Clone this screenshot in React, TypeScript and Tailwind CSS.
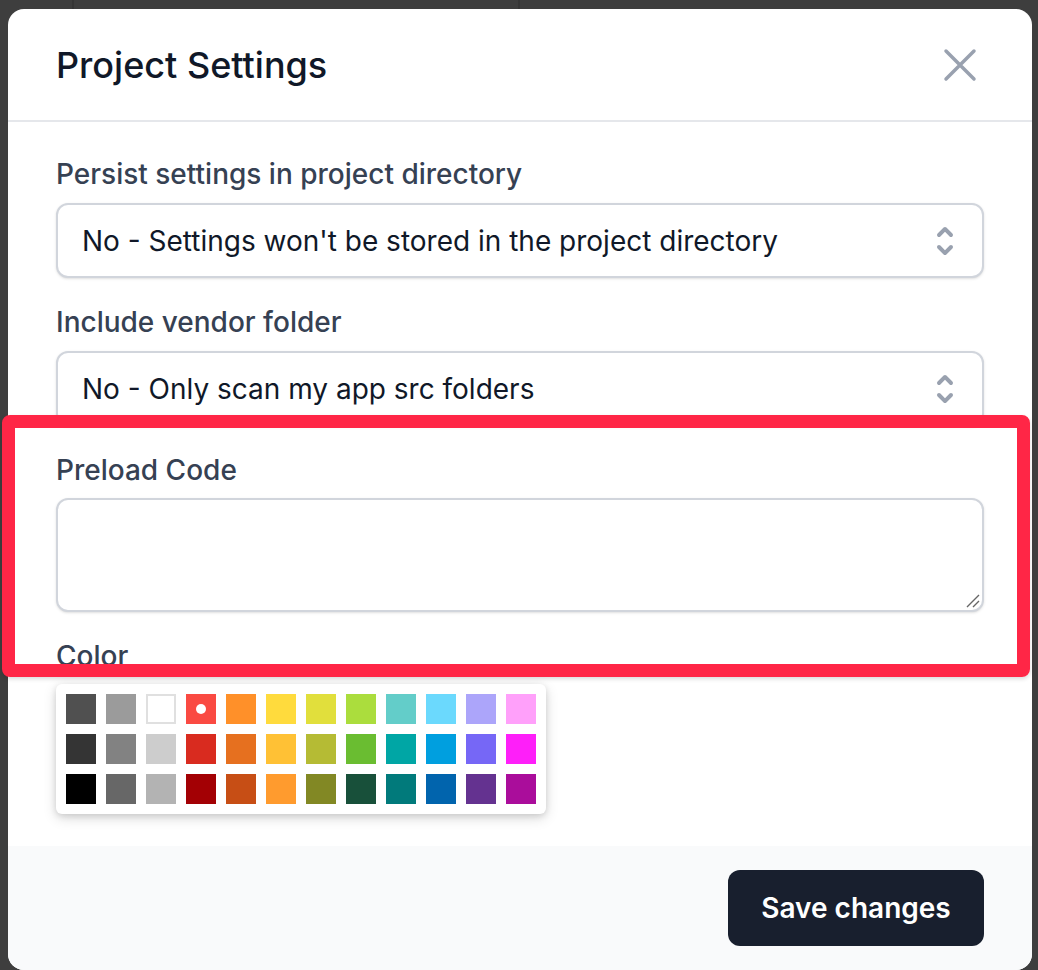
import React from 'react';

const swatchRows: string[][] = [
  ['bg-[#505050]', 'bg-[#9b9b9b]', 'bg-[#ffffff]', 'bg-[#fa4a42]', 'bg-[#ff9029]', 'bg-[#ffdb3d]', 'bg-[#e1df3c]', 'bg-[#abdd3d]', 'bg-[#63cdc9]', 'bg-[#6bd9fd]', 'bg-[#aca5fa]', 'bg-[#ffa0fa]'],
  ['bg-[#343434]', 'bg-[#828282]', 'bg-[#cdcdcd]', 'bg-[#d92b1f]', 'bg-[#e6701f]', 'bg-[#ffc135]', 'bg-[#b5bb34]', 'bg-[#6abd31]', 'bg-[#00a6a5]', 'bg-[#009fdf]', 'bg-[#7667f6]', 'bg-[#fe1ff9]'],
  ['bg-[#000000]', 'bg-[#676767]', 'bg-[#b3b3b3]', 'bg-[#a30004]', 'bg-[#c74e15]', 'bg-[#ff9b2e]', 'bg-[#828824]', 'bg-[#18503a]', 'bg-[#017a7b]', 'bg-[#0164ad]', 'bg-[#643290]', 'bg-[#aa0d9b]'],
];

function SelectorIcon() {
  return (
    <svg viewBox="0 0 20 20" fill="currentColor" className="h-[40px] w-[40px] text-gray-400">
      <path
        fillRule="evenodd"
        d="M10 3a1 1 0 01.707.293l3 3a1 1 0 01-1.414 1.414L10 5.414 7.707 7.707a1 1 0 01-1.414-1.414l3-3A1 1 0 0110 3zm-3.707 9.293a1 1 0 011.414 0L10 14.586l2.293-2.293a1 1 0 011.414 1.414l-3 3a1 1 0 01-1.414 0l-3-3a1 1 0 010-1.414z"
        clipRule="evenodd"
      />
    </svg>
  );
}

function FakeSelect({ value }: { value: string }) {
  return (
    <div className="mt-[9px] flex h-[75px] items-center justify-between rounded-[12px] border-2 border-gray-300 bg-white pl-[24px] pr-[17px] shadow-sm">
      <span className="text-[28px] text-gray-900">{value}</span>
      <SelectorIcon />
    </div>
  );
}

function Label({ children }: { children: React.ReactNode }) {
  return <div className="h-[40px] text-[28px] font-medium leading-[40px] text-gray-700">{children}</div>;
}

export default function App() {
  return (
    <div className="relative h-[970px] w-[1038px] overflow-hidden bg-[#3e3e3e] font-['Inter',sans-serif]">
      {/* page behind the dialog */}
      <div className="flex h-[9px]">
        <div className="w-[74px] border-r-2 border-[#363636]" />
        <div className="w-[446px] border-r-2 border-[#363636]" />
      </div>

      <div className="ml-[8px] flex h-[961px] w-[1024px] flex-col overflow-hidden rounded-[16px] bg-white">
        <div className="flex h-[113px] items-center justify-between border-b-2 border-gray-200 pl-[48px] pr-[44px]">
          <h2 className="text-[36px] font-medium text-gray-900">Project Settings</h2>
          <svg viewBox="0 0 24 24" fill="none" stroke="currentColor" strokeWidth={1.5} className="h-[56px] w-[56px] text-gray-400">
            <path strokeLinecap="round" strokeLinejoin="round" d="M6 18L18 6M6 6l12 12" />
          </svg>
        </div>

        <div className="flex flex-1 flex-col gap-[24px] px-[48px] pt-[32px]">
          <div>
            <Label>Persist settings in project directory</Label>
            <FakeSelect value="No - Settings won't be stored in the project directory" />
          </div>
          <div>
            <Label>Include vendor folder</Label>
            <FakeSelect value="No - Only scan my app src folders" />
          </div>
          <div>
            <Label>Preload Code</Label>
            <div className="relative mt-[8px] h-[114px] rounded-[12px] border-2 border-gray-300 bg-white shadow-sm">
              <svg viewBox="0 0 14 14" className="absolute bottom-[2px] right-[2px] h-[14px] w-[14px]" stroke="#666" strokeWidth={1.4}>
                <path d="M13 1L1 13M13 7L7 13" />
              </svg>
            </div>
          </div>
          <div>
            <Label>Color</Label>
            <div className="mt-[8px] w-[490px] rounded-[6px] bg-white pl-[10px] pt-[10px] shadow-[0_4px_14px_rgba(0,0,0,0.14),0_2px_6px_rgba(0,0,0,0.12)]">
              {swatchRows.map((row, r) => (
                <div key={r} className="flex">
                  {row.map((c, i) => (
                    <div
                      key={i}
                      className={`mb-[10px] mr-[10px] flex h-[30px] w-[30px] items-center justify-center ${c} ${
                        c === 'bg-[#ffffff]' ? 'shadow-[inset_0_0_0_2px_#e0e0e0]' : ''
                      }`}
                    >
                      {r === 0 && i === 3 && <div className="h-[10px] w-[10px] rounded-full bg-white" />}
                    </div>
                  ))}
                </div>
              ))}
            </div>
          </div>
        </div>

        <div className="flex h-[124px] justify-end bg-gray-50 px-[48px] pt-[24px]">
          <button className="h-[76px] w-[256px] rounded-[12px] bg-[#181f2e] text-[28px] font-semibold text-white">
            Save changes
          </button>
        </div>
      </div>

      {/* red annotation frame */}
      <div className="absolute left-[2px] top-[415px] h-[262px] w-[1028px] rounded-[8px] border-[13px] border-[#ff2646] shadow-[0_2px_4px_rgba(0,0,0,0.15)]" />
    </div>
  );
}
